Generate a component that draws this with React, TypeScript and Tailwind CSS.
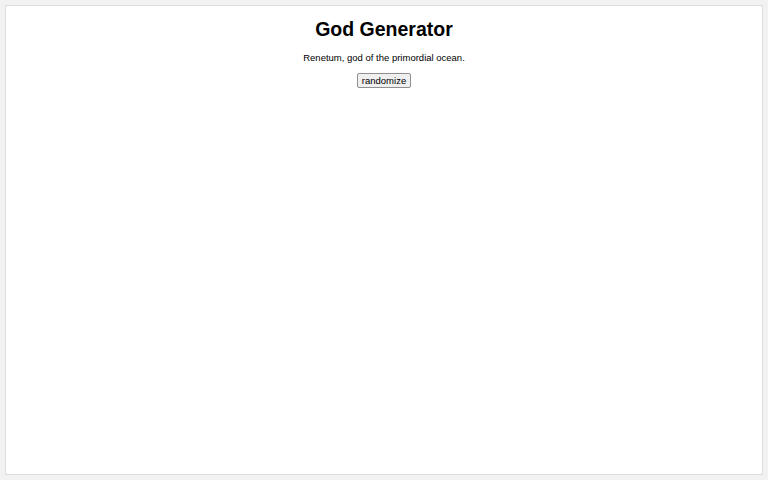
export default function App() {
  return (
    <div className="min-h-[480px] w-[768px] bg-[#f2f2f2] p-[5px] font-['Liberation_Sans',Arial,sans-serif]">
      <div className="flex h-[470px] flex-col items-center border border-[#dcdcdc] bg-white">
        <h1 className="mt-[11px] text-[19.5px] font-bold leading-[24px] text-black">God Generator</h1>
        <p className="mt-[10px] text-[9.5px] leading-[14px] text-black">Renetum, god of the primordial ocean.</p>
        <button className="mt-[8px] h-[15px] rounded-[2px] border border-[#8f8f8f] bg-[#efefef] px-[4px] text-[9.5px] leading-[12px] text-black">
          randomize
        </button>
      </div>
    </div>
  );
}
